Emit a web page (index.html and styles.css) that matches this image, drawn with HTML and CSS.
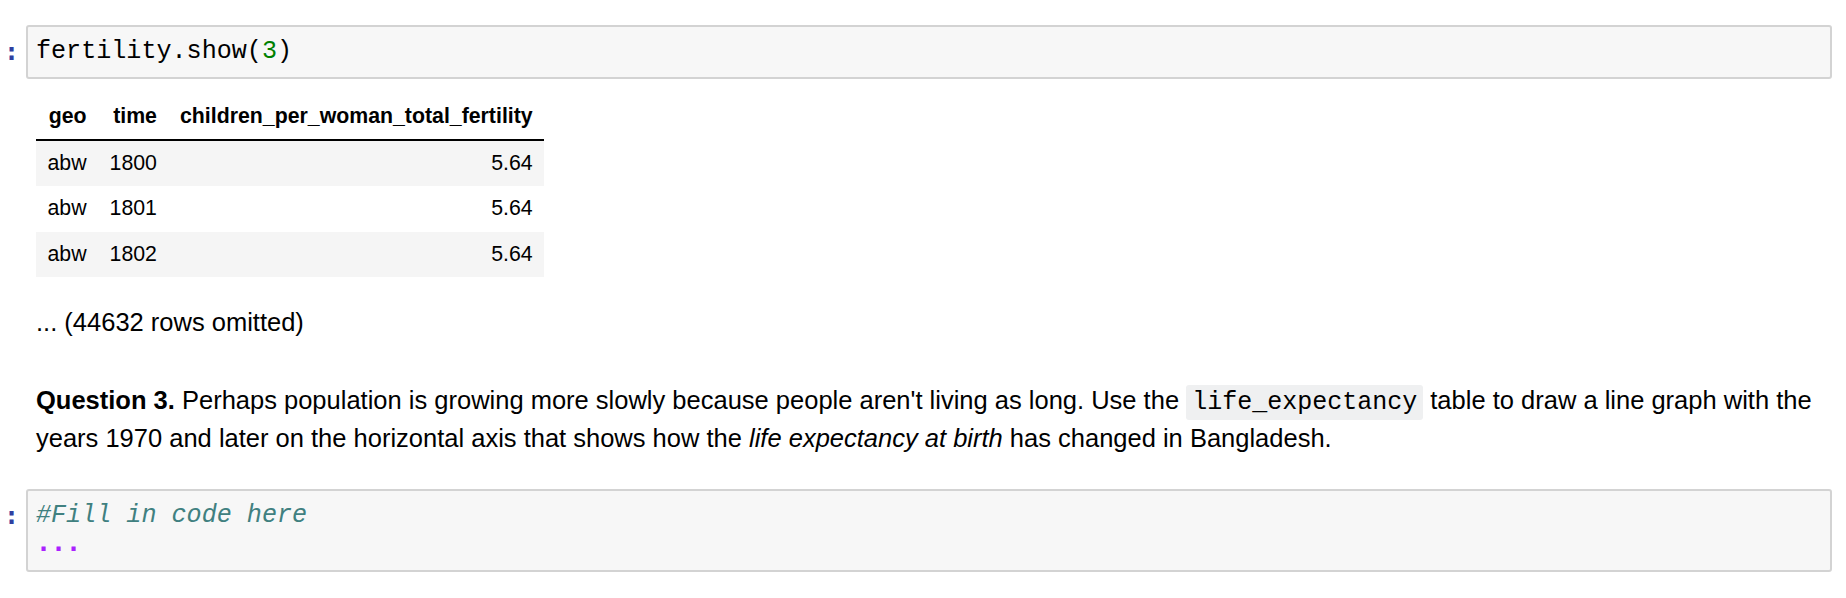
FILE: index.html
```html
<!DOCTYPE html>
<html>
<head>
<meta charset="utf-8">
<link rel="stylesheet" href="styles.css">
</head>
<body>
<div class="notebook">
  <div class="cell code-cell first">
    <div class="prompt">:</div>
    <div class="input-box"><pre class="code">fertility.show(<span class="num">3</span>)</pre></div>
  </div>
  <div class="cell output-cell">
    <div class="prompt"></div>
    <div class="output">
      <table class="df">
        <thead>
          <tr><th>geo</th><th>time</th><th>children_per_woman_total_fertility</th></tr>
        </thead>
        <tbody>
          <tr><td>abw</td><td>1800</td><td>5.64</td></tr>
          <tr><td>abw</td><td>1801</td><td>5.64</td></tr>
          <tr><td>abw</td><td>1802</td><td>5.64</td></tr>
        </tbody>
      </table>
      <p class="omitted">... (44632 rows omitted)</p>
    </div>
  </div>
  <div class="cell md-cell">
    <div class="prompt"></div>
    <div class="md">
      <p><strong>Question 3.</strong> Perhaps population is growing more slowly because people aren't living as long. Use the <code class="inline">life_expectancy</code> table to draw a line graph with the years 1970 and later on the horizontal axis that shows how the <em>life expectancy at birth</em> has changed in Bangladesh.</p>
    </div>
  </div>
  <div class="cell code-cell">
    <div class="prompt">:</div>
    <div class="input-box"><pre class="code"><span class="comment">#Fill in code here</span>
<span class="op">...</span></pre></div>
  </div>
</div>
</body>
</html>
```
FILE: styles.css
```css
html, body {
  margin: 0;
  padding: 0;
  background: #ffffff;
}

body {
  font-family: "Liberation Sans", Arial, sans-serif;
  color: #000;
}

.notebook {
  padding: 25px 14px 0 0;
}

.cell {
  display: flex;
  align-items: flex-start;
}

.prompt {
  flex: 0 0 26px;
  width: 26px;
  font-family: "DejaVu Sans Mono", monospace;
  font-size: 25px;
  line-height: 28px;
  color: #303F9F;
  font-weight: bold;
  padding-top: 13px;
  padding-left: 4px;
  box-sizing: border-box;
}

.input-box {
  flex: 1 1 auto;
  background: #f7f7f7;
  border: 2px solid #d3d3d3;
  border-radius: 3px;
  padding: 11px 8px;
  min-width: 0;
}

.code {
  margin: 0;
  font-family: "Liberation Mono", monospace;
  font-size: 25.1px;
  line-height: 28px;
  color: #000;
  white-space: pre;
}

.num { color: #008000; }
.comment { color: #408080; font-style: italic; }
.op {
  color: #AA22FF;
  font-weight: bold;
  font-family: "DejaVu Sans Mono", monospace;
  font-size: 25px;
  line-height: 1;
}

.output-cell {
  margin-top: 15px;
}

.output {
  flex: 1 1 auto;
  padding-left: 10px;
}

.df {
  border-collapse: collapse;
  border-spacing: 0;
  font-size: 21.3px;
  color: #000;
}

.df th {
  font-weight: bold;
  text-align: right;
  vertical-align: middle;
  height: 46px;
  padding: 0 11.5px;
  border-bottom: 2px solid #000;
  box-sizing: border-box;
}

.df td {
  text-align: right;
  height: 45.3px;
  padding: 0 11.5px;
  vertical-align: middle;
}

.df tbody tr:nth-child(odd) {
  background: #f5f5f5;
}

.omitted {
  margin: 26px 0 0 0;
  font-size: 25.5px;
  line-height: 38px;
}

.md-cell {
  margin-top: 40px;
}

.md {
  flex: 1 1 auto;
  padding-left: 10px;
}

.md p {
  margin: 0;
  font-size: 25.5px;
  line-height: 38px;
}

.inline {
  font-family: "Liberation Mono", monospace;
  font-size: 25px;
  line-height: 1;
  background: #eff0f1;
  border-radius: 3px;
  padding: 3px 6px;
}

.md-cell + .code-cell {
  margin-top: 32px;
}
```
